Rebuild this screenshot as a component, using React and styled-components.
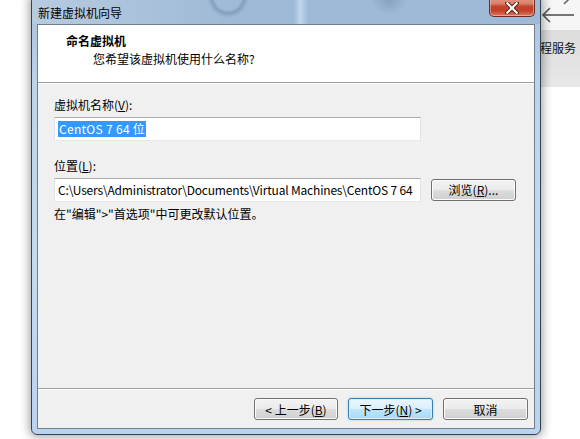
import React from "react";
import styled, { createGlobalStyle } from "styled-components";

const GlobalStyle = createGlobalStyle`
  html, body {
    margin: 0;
    padding: 0;
    background: #ffffff;
  }
  body {
    font-family: "Noto Sans CJK SC", "Noto Sans", sans-serif;
    font-size: 12px;
    color: #000;
  }
`;

const Desktop = styled.div`
  position: relative;
  width: 580px;
  height: 439px;
  overflow: hidden;
  background: #ffffff;
`;

/* the application window lying behind the dialog */
const BackApp = styled.div`
  position: absolute;
  left: 300px;
  top: 0;
  width: 280px;
  display: flex;
  flex-direction: column;
`;

const BackToolbar = styled.div`
  height: 30px;
  background: #f6f6f6;
  display: flex;
  justify-content: flex-end;
  align-items: center;
  padding-right: 4px;
`;

const BackTabs = styled.div`
  height: 57px;
  background: linear-gradient(#dcdcdc, #e8e8e8);
  display: flex;
  align-items: center;
  padding-left: 228px;
  font-size: 12px;
  color: #111;
  white-space: nowrap;
  padding-bottom: 22px;
  box-sizing: border-box;
`;

const Win = styled.div`
  position: absolute;
  left: 31px;
  top: -6px;
  width: 510px;
  height: 441px;
  box-sizing: border-box;
  border: 1px solid #34414f;
  border-radius: 7px 7px 6px 6px;
  padding: 0 5px 5px 5px;
  display: flex;
  flex-direction: column;
  background: linear-gradient(
    180deg,
    #a7c0da 0%,
    #bcd3ec 20%,
    #c3daf2 60%,
    #bad3ee 100%
  );
  box-shadow: 0 0 10px 2px rgba(0, 0, 0, 0.35);
`;

const TitleBar = styled.div`
  position: relative;
  height: 29px;
  flex-shrink: 0;
  margin: 0 -5px;
  padding-left: 6px;
  display: flex;
  align-items: center;
  padding-top: 5px;
  box-sizing: border-box;
  border-radius: 6px 6px 0 0;
  background:
    radial-gradient(circle at 196px 2px, transparent 13px, rgba(80, 110, 145, 0.35) 16px, transparent 21px),
    radial-gradient(ellipse 18px 16px at 357px 4px, rgba(85, 115, 150, 0.35), transparent),
    linear-gradient(90deg, transparent 262px, rgba(205, 228, 250, 0.7) 268px, transparent 276px),
    linear-gradient(90deg, #b7cbe0 0%, #a8c0da 25%, #9dbad6 40%, #9fbad6 100%);
  font-size: 12px;
  color: #000;
`;

const CloseButton = styled.div`
  position: absolute;
  right: 5px;
  top: 0;
  width: 46px;
  height: 22px;
  box-sizing: border-box;
  border: 1px solid #6a2c22;
  border-top: none;
  border-radius: 0 0 5px 5px;
  background: linear-gradient(
    180deg,
    #e9a99a 0%,
    #d9826d 40%,
    #c4432b 55%,
    #c2412a 75%,
    #dc7e62 100%
  );
  box-shadow: inset 0 0 0 1px rgba(255, 220, 210, 0.45);
  display: flex;
  align-items: center;
  justify-content: center;
  padding-top: 4px;
`;

const Client = styled.div`
  flex: 1;
  border: 1px solid #6f7f90;
  background: #f0f0f0;
  display: flex;
  flex-direction: column;
  min-height: 0;
`;

const Header = styled.div`
  height: 58px;
  flex-shrink: 0;
  box-sizing: border-box;
  background: #ffffff;
  border-bottom: 1px solid #a0a0a0;
  padding: 8px 0 0 28px;
  line-height: 16px;
`;

const HeaderTitle = styled.div`
  font-weight: bold;
`;

const HeaderSub = styled.div`
  margin: 2px 0 0 27px;
`;

const Body = styled.div`
  flex: 1;
  padding: 13px 0 0 16px;
  display: flex;
  flex-direction: column;
  line-height: 16px;
  border-top: 1px solid #ffffff;
`;

const Label = styled.div`
  margin-top: ${(p) => p.$gap || 0}px;
`;

const Row = styled.div`
  display: flex;
  align-items: center;
  gap: 10px;
  margin-top: 4px;
`;

const TextBox = styled.div`
  width: 367px;
  height: 24px;
  flex-shrink: 0;
  box-sizing: border-box;
  background: #ffffff;
  border: 1px solid #dbdfe6;
  border-top-color: #abadb3;
  border-left-color: #e2e3ea;
  border-right-color: #e2e3ea;
  border-bottom-color: #e3e9ef;
  display: flex;
  align-items: center;
  padding-left: 3px;
  white-space: nowrap;
  overflow: hidden;
  letter-spacing: ${(p) => p.$tight ? "-0.18px" : "0"};
`;

const Selected = styled.span`
  background: #3399ff;
  color: #ffffff;
  line-height: 16px;
  padding: 0 1px;
  letter-spacing: 0.3px;
`;

const Hint = styled.div`
  margin-top: 4px;
`;

const Footer = styled.div`
  flex-shrink: 0;
  border-top: 1px solid #a0a0a0;
  box-shadow: inset 0 1px 0 #ffffff;
  padding: 9px 6px 8px 0;
  display: flex;
  justify-content: flex-end;
  gap: 10px;
`;

const Button = styled.div`
  width: ${(p) => p.$w || 85}px;
  height: 22px;
  box-sizing: border-box;
  border: 1px solid ${(p) => (p.$focus ? "#3c7fb1" : "#707070")};
  border-radius: 3px;
  display: flex;
  align-items: center;
  justify-content: center;
  white-space: nowrap;
  font-size: 12px;
  color: #000;
  background: ${(p) =>
    p.$focus
      ? "linear-gradient(180deg, #eaf6fd 0%, #d9f0fc 50%, #bee6fd 50%, #a7d9f5 100%)"
      : "linear-gradient(180deg, #f2f2f2 0%, #ebebeb 50%, #dddddd 50%, #cfcfcf 100%)"};
  box-shadow: ${(p) =>
    p.$focus
      ? "inset 0 0 0 1px #d6effc, 0 0 2px #7ec4ef"
      : "inset 0 0 0 1px #fcfcfc"};
`;

function CloseGlyph() {
  return (
    <svg width="14" height="12" viewBox="0 0 14 12">
      <path
        d="M2 1 L12 11 M12 1 L2 11"
        stroke="#5a1d14"
        strokeWidth="4"
        strokeLinecap="square"
      />
      <path
        d="M2.3 1.3 L11.7 10.7 M11.7 1.3 L2.3 10.7"
        stroke="#ffffff"
        strokeWidth="2.2"
        strokeLinecap="square"
      />
    </svg>
  );
}

function BackArrow() {
  return (
    <svg width="36" height="30" viewBox="0 0 36 30">
      <path d="M10 8 L3 15 L10 22" stroke="#555" strokeWidth="1.6" fill="none" />
      <path d="M4 15 H34" stroke="#555" strokeWidth="1.6" />
      <path d="M24 4 L32 -4" stroke="#666" strokeWidth="1.6" />
    </svg>
  );
}

export default function App() {
  return (
    <>
      <GlobalStyle />
      <Desktop>
        <BackApp>
          <BackToolbar>
            <BackArrow />
          </BackToolbar>
          <BackTabs>远程服务</BackTabs>
        </BackApp>

        <Win>
          <TitleBar>
            新建虚拟机向导
            <CloseButton>
              <CloseGlyph />
            </CloseButton>
          </TitleBar>
          <Client>
            <Header>
              <HeaderTitle>命名虚拟机</HeaderTitle>
              <HeaderSub>您希望该虚拟机使用什么名称?</HeaderSub>
            </Header>
            <Body>
              <Label>
                虚拟机名称(<u>V</u>):
              </Label>
              <Row>
                <TextBox>
                  <Selected>CentOS 7 64 位</Selected>
                </TextBox>
              </Row>
              <Label $gap={17}>
                位置(<u>L</u>):
              </Label>
              <Row>
                <TextBox $tight>
                  C:\Users\Administrator\Documents\Virtual Machines\CentOS 7 64
                </TextBox>
                <Button>
                  浏览(<u>R</u>)...
                </Button>
              </Row>
              <Hint>在"编辑"&gt;"首选项"中可更改默认位置。</Hint>
            </Body>
            <Footer>
              <Button $w={84}>
                &lt; 上一步(<u>B</u>)
              </Button>
              <Button $focus>
                下一步(<u>N</u>) &gt;
              </Button>
              <Button>取消</Button>
            </Footer>
          </Client>
        </Win>
      </Desktop>
    </>
  );
}
